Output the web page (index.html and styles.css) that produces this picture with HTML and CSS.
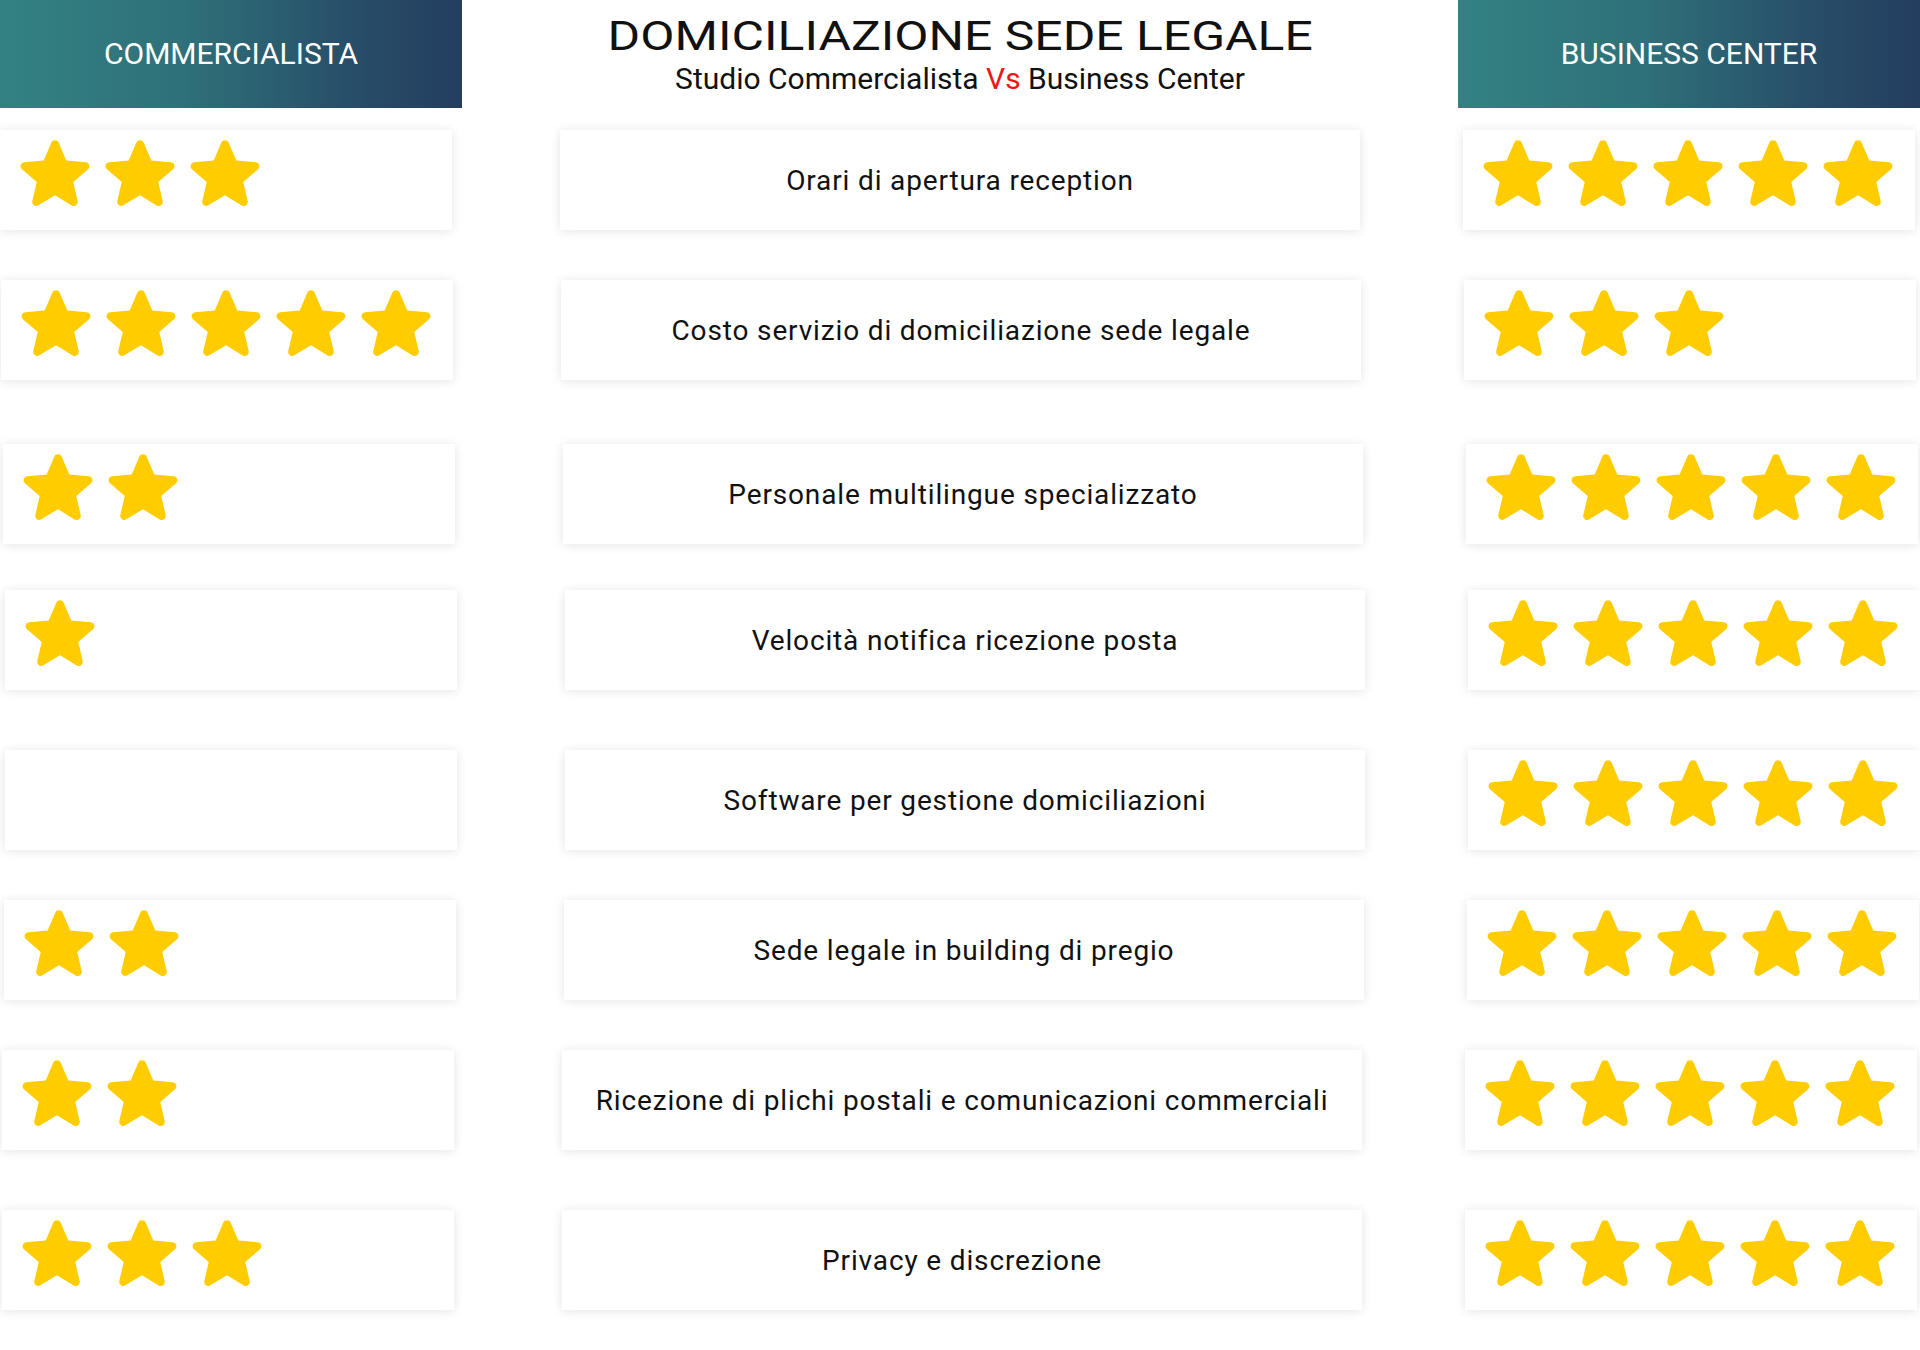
FILE: index.html
```html
<!DOCTYPE html>
<html lang="it">
<head>
<meta charset="utf-8">
<title>Domiciliazione sede legale</title>
<link rel="stylesheet" href="styles.css">
</head>
<body>
<svg class="defs" width="0" height="0" aria-hidden="true">
  <symbol id="star" viewBox="3.3 3.55 17.4 16.6">
    <path d="M12 17.27l4.15 2.51c.76.46 1.69-.22 1.49-1.08l-1.1-4.72 3.670-3.18c.67-.58.31-1.68-.57-1.75l-4.83-.41-1.890-4.460c-.34-.81-1.5-.81-1.84 0L9.19 8.63l-4.83.41c-.88.07-1.24 1.170-.57 1.75l3.67 3.18-1.1 4.72c-.2.86.73 1.54 1.49 1.08l4.15-2.5z"/>
  </symbol>
</svg>

<div class="page">
  <header class="top">
    <div class="col-head">COMMERCIALISTA</div>
    <div class="title">
      <h1><span class="wide">DOMICILIAZIONE SEDE LEGALE</span></h1>
      <p class="sub">Studio Commercialista <span class="vs">Vs</span> Business Center</p>
    </div>
    <div class="col-head">BUSINESS CENTER</div>
  </header>

  <div class="rows">
    <div class="row r1">
      <div class="card stars"><svg class="star"><use href="#star"/></svg><svg class="star"><use href="#star"/></svg><svg class="star"><use href="#star"/></svg></div>
      <div class="card label">Orari di apertura reception</div>
      <div class="card stars"><svg class="star"><use href="#star"/></svg><svg class="star"><use href="#star"/></svg><svg class="star"><use href="#star"/></svg><svg class="star"><use href="#star"/></svg><svg class="star"><use href="#star"/></svg></div>
    </div>
    <div class="row r2">
      <div class="card stars"><svg class="star"><use href="#star"/></svg><svg class="star"><use href="#star"/></svg><svg class="star"><use href="#star"/></svg><svg class="star"><use href="#star"/></svg><svg class="star"><use href="#star"/></svg></div>
      <div class="card label">Costo servizio di domiciliazione sede legale</div>
      <div class="card stars"><svg class="star"><use href="#star"/></svg><svg class="star"><use href="#star"/></svg><svg class="star"><use href="#star"/></svg></div>
    </div>
    <div class="row r3">
      <div class="card stars"><svg class="star"><use href="#star"/></svg><svg class="star"><use href="#star"/></svg></div>
      <div class="card label">Personale multilingue specializzato</div>
      <div class="card stars"><svg class="star"><use href="#star"/></svg><svg class="star"><use href="#star"/></svg><svg class="star"><use href="#star"/></svg><svg class="star"><use href="#star"/></svg><svg class="star"><use href="#star"/></svg></div>
    </div>
    <div class="row r4">
      <div class="card stars"><svg class="star"><use href="#star"/></svg></div>
      <div class="card label">Velocità notifica ricezione posta</div>
      <div class="card stars"><svg class="star"><use href="#star"/></svg><svg class="star"><use href="#star"/></svg><svg class="star"><use href="#star"/></svg><svg class="star"><use href="#star"/></svg><svg class="star"><use href="#star"/></svg></div>
    </div>
    <div class="row r5">
      <div class="card stars"></div>
      <div class="card label">Software per gestione domiciliazioni</div>
      <div class="card stars"><svg class="star"><use href="#star"/></svg><svg class="star"><use href="#star"/></svg><svg class="star"><use href="#star"/></svg><svg class="star"><use href="#star"/></svg><svg class="star"><use href="#star"/></svg></div>
    </div>
    <div class="row r6">
      <div class="card stars"><svg class="star"><use href="#star"/></svg><svg class="star"><use href="#star"/></svg></div>
      <div class="card label">Sede legale in building di pregio</div>
      <div class="card stars"><svg class="star"><use href="#star"/></svg><svg class="star"><use href="#star"/></svg><svg class="star"><use href="#star"/></svg><svg class="star"><use href="#star"/></svg><svg class="star"><use href="#star"/></svg></div>
    </div>
    <div class="row r7">
      <div class="card stars"><svg class="star"><use href="#star"/></svg><svg class="star"><use href="#star"/></svg></div>
      <div class="card label">Ricezione di plichi postali e comunicazioni commerciali</div>
      <div class="card stars"><svg class="star"><use href="#star"/></svg><svg class="star"><use href="#star"/></svg><svg class="star"><use href="#star"/></svg><svg class="star"><use href="#star"/></svg><svg class="star"><use href="#star"/></svg></div>
    </div>
    <div class="row r8">
      <div class="card stars"><svg class="star"><use href="#star"/></svg><svg class="star"><use href="#star"/></svg><svg class="star"><use href="#star"/></svg></div>
      <div class="card label">Privacy e discrezione</div>
      <div class="card stars"><svg class="star"><use href="#star"/></svg><svg class="star"><use href="#star"/></svg><svg class="star"><use href="#star"/></svg><svg class="star"><use href="#star"/></svg><svg class="star"><use href="#star"/></svg></div>
    </div>
  </div>
</div>
</body>
</html>
```

FILE: styles.css
```css
html, body {
  margin: 0;
  padding: 0;
  background: #ffffff;
}
body {
  font-family: Roboto, "Liberation Sans", Arial, sans-serif;
  color: #111111;
  overflow: hidden;
}
.defs {
  position: absolute;
  width: 0;
  height: 0;
  overflow: hidden;
}
.page {
  width: 1920px;
  height: 1350px;
}
.top {
  display: grid;
  grid-template-columns: 462px 1fr 462px;
  height: 108px;
}
.col-head {
  display: flex;
  align-items: center;
  justify-content: center;
  padding-bottom: 2px;
  background: linear-gradient(to right, #338282 0%, #2f7079 40%, #284f69 75%, #243d5f 100%);
  color: #ffffff;
  font-size: 30px;
}
.title {
  text-align: center;
}
.title h1 {
  margin: 12px 0 0;
  font-size: 41px;
  line-height: 48px;
  font-weight: 400;
  color: #111111;
}
.wide {
  display: inline-block;
  transform: scaleX(1.215);
}
.sub {
  margin: 1px 0 0;
  font-size: 30px;
  line-height: 35px;
  color: #111111;
}
.vs {
  color: #ee1515;
}
.rows {
  display: flex;
  flex-direction: column;
}
.row {
  display: flex;
  height: 100px;
}
.card {
  flex: none;
  background: #ffffff;
  box-shadow: 0 1px 10px rgba(0, 0, 0, 0.11);
  height: 100px;
  box-sizing: border-box;
}
.stars {
  width: 452px;
  display: flex;
  gap: 15px;
  padding: 10px 0 0 20px;
}
.star {
  width: 70px;
  height: 67px;
  fill: #ffcc00;
  flex: none;
}
.label {
  width: 800px;
  margin: 0 103px 0 108px;
  display: flex;
  align-items: center;
  justify-content: center;
  font-size: 28px;
  letter-spacing: 0.85px;
  color: #111111;
}
.r1 { margin-top: 22px; padding-left: 0; }
.r2 { margin-top: 50px; padding-left: 1px; }
.r3 { margin-top: 64px; padding-left: 3px; }
.r4 { margin-top: 46px; padding-left: 5px; }
.r5 { margin-top: 60px; padding-left: 5px; }
.r6 { margin-top: 50px; padding-left: 4px; }
.r7 { margin-top: 50px; padding-left: 2px; }
.r8 { margin-top: 60px; padding-left: 2px; }
```
